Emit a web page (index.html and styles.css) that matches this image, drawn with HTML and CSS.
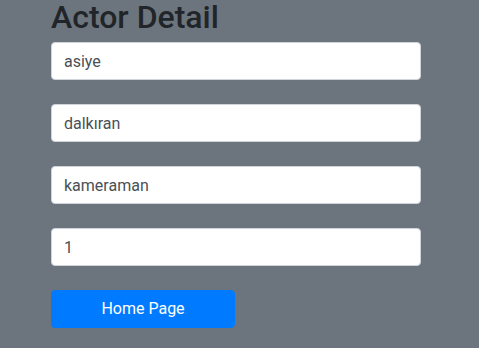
FILE: index.html
```html
<!DOCTYPE html>
<html lang="en">
<head>
    <meta charset="UTF-8">
    <meta name="viewport" content="width=device-width, initial-scale=1.0">
    <title>Actor Detail</title>
    <link rel="stylesheet" href="styles.css">
</head>
<body>
    <div class="container">
        <h2 class="title">Actor Detail</h2>
        <form class="actor-form">
            <div class="form-group">
                <input type="text" class="form-control" value="asiye">
            </div>
            <div class="form-group">
                <input type="text" class="form-control" value="dalkıran">
            </div>
            <div class="form-group">
                <input type="text" class="form-control" value="kameraman">
            </div>
            <div class="form-group">
                <input type="text" class="form-control" value="1">
            </div>
            <button type="button" class="btn btn-primary">Home Page</button>
        </form>
    </div>
</body>
</html>
```

FILE: styles.css
```css
html, body {
    height: 100%;
}

body {
    font-family: "Segoe UI", Roboto, "Liberation Sans", sans-serif;
    background-color: #6c757d;
    color: #212529;
    margin: 0;
    padding: 0;
}

.container {
    padding-left: 51px;
    width: 370px;
}

.title {
    margin: 0 0 8px 0;
    font-size: 32px;
    font-weight: 500;
    line-height: 34px;
    color: #212529;
}

.actor-form {
    display: flex;
    flex-direction: column;
    gap: 24px;
}

.form-control {
    display: block;
    box-sizing: border-box;
    width: 100%;
    height: 38px;
    padding: 6px 12px;
    font-family: inherit;
    font-size: 16px;
    line-height: 1.5;
    color: #495057;
    background-color: #fff;
    border: 1px solid #ced4da;
    border-radius: 4px;
}

.btn {
    box-sizing: border-box;
    width: 184px;
    height: 38px;
    padding: 6px 12px;
    font-family: inherit;
    font-size: 16px;
    line-height: 1.5;
    border: 1px solid transparent;
    border-radius: 4px;
    cursor: pointer;
}

.btn-primary {
    color: #fff;
    background-color: #007bff;
    border-color: #007bff;
}
```
